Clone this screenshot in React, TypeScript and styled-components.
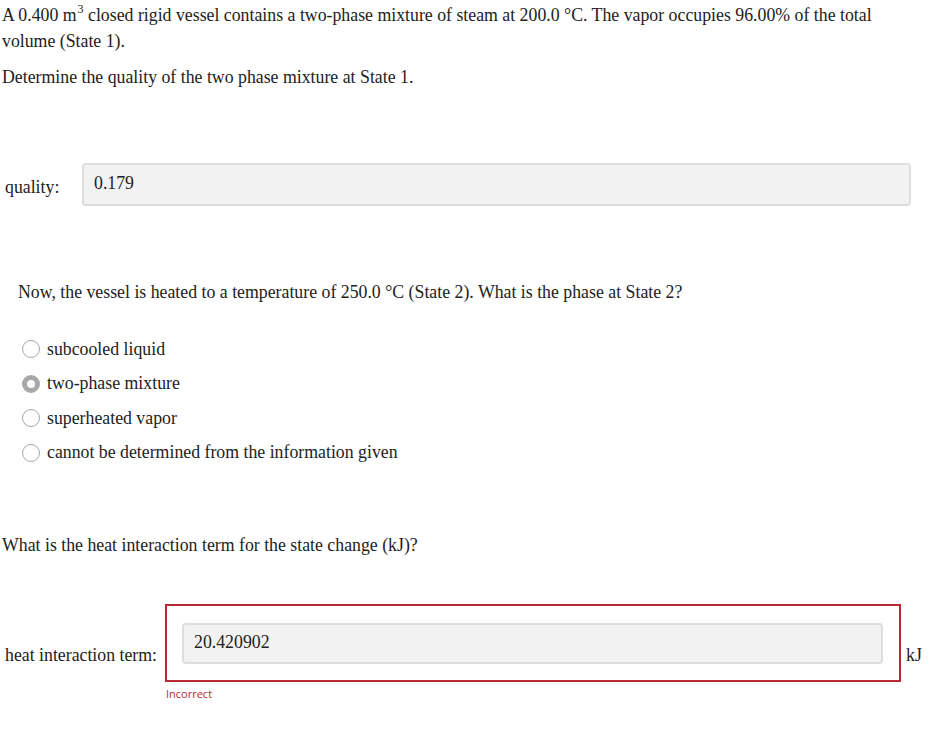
import React from 'react';
import styled, { createGlobalStyle } from 'styled-components';

const Global = createGlobalStyle`
  html, body {
    margin: 0;
    padding: 0;
    background: #fff;
  }
  body {
    font-family: 'Liberation Serif', 'Times New Roman', serif;
    font-size: 17.8px;
    color: #222;
  }
`;

const Page = styled.div`
  width: 935px;
  padding: 2px 0 0 2px;
  box-sizing: border-box;
`;

const Para = styled.p<{ $indent?: number; $mt?: number }>`
  margin: ${(p) => p.$mt ?? 0}px 0 0 ${(p) => p.$indent ?? 0}px;
  line-height: 26px;
  padding-right: 40px;

  sup {
    font-size: 12px;
    line-height: 0;
    vertical-align: 8px;
    margin-left: 1px;
  }
`;

const FieldRow = styled.div<{ $mt: number }>`
  display: flex;
  align-items: center;
  margin-top: ${(p) => p.$mt}px;
  padding-left: 3px;
`;

const Label = styled.span<{ $w: number; $drop?: number }>`
  width: ${(p) => p.$w}px;
  padding-top: ${(p) => p.$drop ?? 0}px;
  flex: none;
  white-space: nowrap;
`;

const ValueBox = styled.div<{ $w: number; $h: number }>`
  width: ${(p) => p.$w}px;
  height: ${(p) => p.$h}px;
  box-sizing: border-box;
  background: #f2f2f2;
  border: 2px solid #dedede;
  border-radius: 4px;
  display: flex;
  align-items: center;
  padding-left: 10px;
  padding-bottom: 2px;
`;

const Options = styled.div`
  margin-top: 33px;
  margin-left: 20px;
  display: flex;
  flex-direction: column;
  gap: 12px;
`;

const Option = styled.label`
  display: flex;
  align-items: center;
  gap: 7px;
  height: 22.5px;
`;

const Radio = styled.span<{ $checked?: boolean }>`
  width: 18px;
  height: 18px;
  box-sizing: border-box;
  border-radius: 50%;
  border: ${(p) => (p.$checked ? '5.5px solid #a8a8a8' : '1.5px solid #a8a8a8')};
  background: #fff;
  flex: none;
`;

const AnswerRow = styled.div`
  display: flex;
  align-items: center;
  margin-top: 46px;
  padding-left: 3px;
`;

const Wrong = styled.div`
  width: 736px;
  height: 78px;
  box-sizing: border-box;
  border: 2px solid #b52a35;
  display: flex;
  align-items: center;
  padding: 0 16px 0 15px;
`;

const Unit = styled.span`
  margin-left: 5px;
  padding-top: 24px;
`;

const Note = styled.div`
  margin: 4px 0 0 164px;
  font-family: 'Open Sans', 'Noto Sans', sans-serif;
  font-size: 11px;
  color: #b52a35;
`;

export default function App() {
  return (
    <Page>
      <Global />
      <Para>
        A 0.400 m<sup>3</sup> closed rigid vessel contains a two-phase mixture of steam at 200.0 °C. The vapor
        occupies 96.00% of the total volume (State 1).
      </Para>
      <Para $mt={10}>Determine the quality of the two phase mixture at State 1.</Para>

      <FieldRow $mt={73}>
        <Label $w={77} $drop={6}>quality:</Label>
        <ValueBox $w={829} $h={43}>0.179</ValueBox>
      </FieldRow>

      <Para $indent={16} $mt={73}>
        Now, the vessel is heated to a temperature of 250.0 °C (State 2). What is the phase at State 2?
      </Para>

      <Options>
        <Option>
          <Radio />
          subcooled liquid
        </Option>
        <Option>
          <Radio $checked />
          two-phase mixture
        </Option>
        <Option>
          <Radio />
          superheated vapor
        </Option>
        <Option>
          <Radio />
          cannot be determined from the information given
        </Option>
      </Options>

      <Para $mt={68}>What is the heat interaction term for the state change (kJ)?</Para>

      <AnswerRow>
        <Label $w={160} $drop={24}>heat interaction term:</Label>
        <Wrong>
          <ValueBox $w={703} $h={41}>20.420902</ValueBox>
        </Wrong>
        <Unit>kJ</Unit>
      </AnswerRow>
      <Note>Incorrect</Note>
    </Page>
  );
}
